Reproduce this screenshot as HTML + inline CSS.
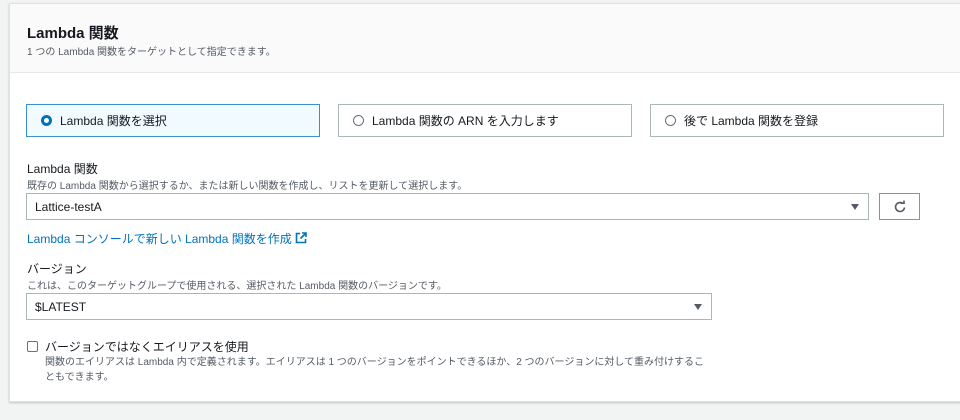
<!DOCTYPE html>
<html><head><meta charset="utf-8"><style>
*{box-sizing:border-box;margin:0;padding:0}
body{width:960px;height:420px;background:#f2f3f3;font-family:"Liberation Sans","Noto Sans CJK JP",sans-serif;color:#16191f;position:relative;overflow:hidden}
.card{position:absolute;left:9px;top:3px;width:960px;height:399px;background:#fff;border:1px solid #e0e2e3;box-shadow:0 1px 2px rgba(0,0,0,.2)}
.hdr{position:absolute;left:0;top:0;right:0;height:69px;background:#fafafa;border-bottom:1px solid #e6e8e8}
.a{position:absolute;white-space:nowrap}
.h{left:17px;top:18px;font-size:15px;font-weight:bold}
.sd{font-size:10px;color:#545b64}
.rb{position:absolute;top:100px;height:33px;width:294px;border:1px solid #aab7b8;font-size:12px;display:flex;align-items:center;padding-left:14px}
.rb.s{background:#f1faff;border-color:#3b8fd1}
.rad{width:11px;height:11px;border:1px solid #687078;border-radius:50%;margin-right:8px;background:#fff}
.rb.s .rad{border:3px solid #0073bb}
.lbl{font-size:12px}
.sel{position:absolute;height:27px;border:1px solid #aab7b8;font-size:12px;padding:6px 0 0 8px}
.tri{position:absolute;right:9px;top:10px;width:0;height:0;border-left:4px solid transparent;border-right:4px solid transparent;border-top:6px solid #545b64}
</style></head><body>
<div class="card">
<div class="hdr"></div>
<div class="a h">Lambda 関数</div>
<div class="a sd" style="left:17px;top:39px">1 つの Lambda 関数をターゲットとして指定できます。</div>
<div class="rb s" style="left:16px"><span class="rad"></span>Lambda 関数を選択</div>
<div class="rb" style="left:328px"><span class="rad"></span>Lambda 関数の ARN を入力します</div>
<div class="rb" style="left:640px"><span class="rad"></span>後で Lambda 関数を登録</div>
<div class="a lbl" style="left:17px;top:156px">Lambda 関数</div>
<div class="a sd" style="left:17px;top:173px">既存の Lambda 関数から選択するか、または新しい関数を作成し、リストを更新して選択します。</div>
<div class="sel" style="left:16px;top:189px;width:843px">Lattice-testA<span class="tri"></span></div>
<div class="a" style="left:869px;top:189px;width:41px;height:27px;border:1px solid #879596;display:flex;align-items:center;justify-content:center">
<svg width="14" height="14" viewBox="0 0 14 14"><path d="M11.5 7.5A4.5 4.5 0 1 1 10 3.6" fill="none" stroke="#545b64" stroke-width="1.6"/><path d="M7.5 3.2H11V0.5" fill="none" stroke="#545b64" stroke-width="1.6"/></svg></div>
<div class="a" style="left:17px;top:226px;font-size:12px;color:#0073bb">Lambda コンソールで新しい Lambda 関数を作成 <svg width="12" height="12" viewBox="0 0 12 12" style="vertical-align:-1px"><path d="M5 1.5H1.5v9h9V7M7 1h4v4M11 1L5.5 6.5" fill="none" stroke="#0073bb" stroke-width="1.6"/></svg></div>
<div class="a lbl" style="left:17px;top:256px">バージョン</div>
<div class="a sd" style="left:17px;top:273px">これは、このターゲットグループで使用される、選択された Lambda 関数のバージョンです。</div>
<div class="sel" style="left:16px;top:289px;width:686px">$LATEST<span class="tri"></span></div>
<div class="a" style="left:17px;top:337px;width:11px;height:11px;border:1px solid #687078;border-radius:2px"></div>
<div class="a lbl" style="left:35px;top:334px">バージョンではなくエイリアスを使用</div>
<div class="a sd" style="left:35px;top:351px;line-height:15px">関数のエイリアスは Lambda 内で定義されます。エイリアスは 1 つのバージョンをポイントできるほか、2 つのバージョンに対して重み付けするこ<br>ともできます。</div>
</div>
</body></html>
